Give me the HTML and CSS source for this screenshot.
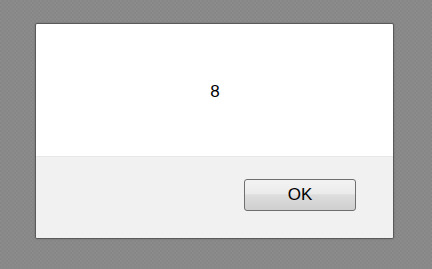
FILE: index.html
```html
<!DOCTYPE html>
<html>
<head>
<meta charset="utf-8">
<link rel="stylesheet" href="styles.css">
</head>
<body>
<div class="dialog">
  <div class="message">8</div>
  <div class="footer">
    <button class="ok">OK</button>
  </div>
</div>
</body>
</html>
```
FILE: styles.css
```css
html, body {
  margin: 0;
  padding: 0;
  height: 100%;
}
body {
  background-color: #8b8b8b;
  background-image:
    linear-gradient(45deg, rgba(0,0,0,0.03) 25%, transparent 25%, transparent 75%, rgba(0,0,0,0.03) 75%),
    linear-gradient(45deg, rgba(0,0,0,0.03) 25%, transparent 25%, transparent 75%, rgba(0,0,0,0.03) 75%);
  background-size: 4px 4px;
  background-position: 0 0, 2px 2px;
  font-family: "Liberation Sans", Arial, sans-serif;
  overflow: hidden;
  padding: 23px 0 0 35px;
  box-sizing: border-box;
}
.dialog {
  width: 357px;
  height: 214px;
  border: 1px solid #5a5a5a;
  border-radius: 2px;
  background: #fff;
  display: flex;
  flex-direction: column;
  box-shadow: 0 0 2px rgba(0,0,0,0.2);
}
.message {
  height: 133px;
  flex: none;
  box-sizing: border-box;
  padding-top: 58px;
  padding-left: 1px;
  text-align: center;
  font-size: 17px;
  color: #000;
  border-bottom: 1px solid #e8e8e8;
}
.footer {
  flex: 1;
  background: #f1f1f1;
  display: flex;
  justify-content: flex-end;
  align-items: flex-start;
  padding: 22px 37px 0 0;
  border-radius: 0 0 2px 2px;
}
.ok {
  width: 112px;
  height: 32px;
  border: 1px solid #6f6f6f;
  border-radius: 3px;
  background: linear-gradient(#f3f3f3 0%, #ebebeb 45%, #dddddd 50%, #cfcfcf 100%);
  font-family: "Liberation Sans", Arial, sans-serif;
  font-size: 17px;
  color: #000;
  padding: 0;
  margin: 0;
}
```
